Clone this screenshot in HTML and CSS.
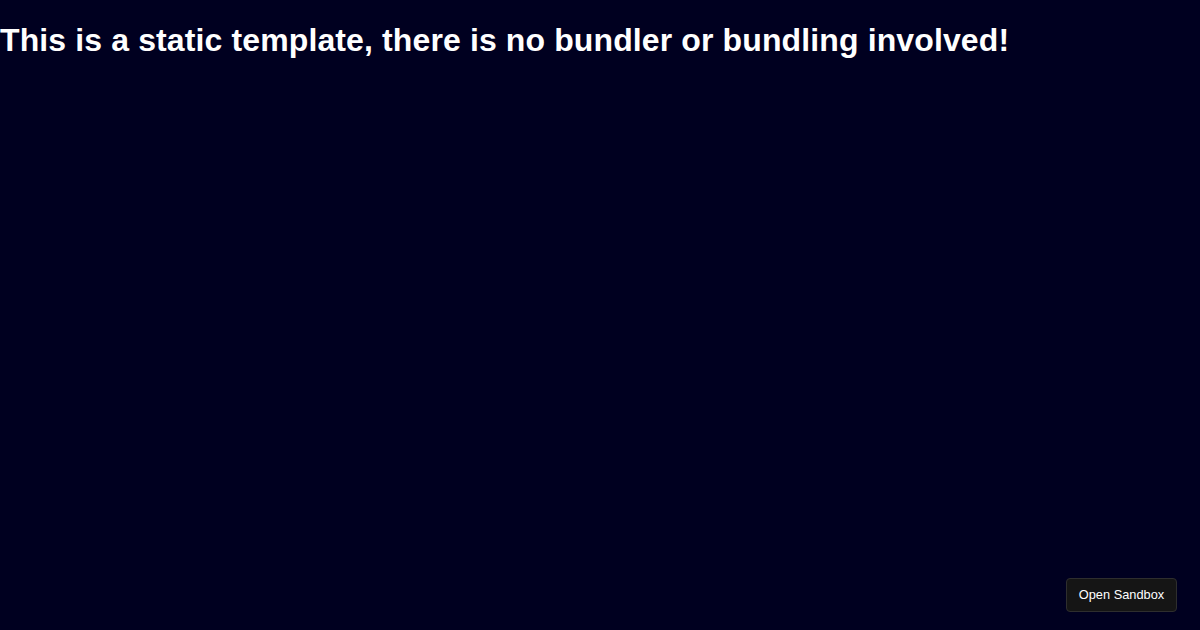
FILE: index.html
```html
<!DOCTYPE html>
<html>
<head>
<meta charset="utf-8">
<link rel="stylesheet" href="styles.css">
</head>
<body>
<h1 class="title">This is a static template, there is no bundler or bundling involved!</h1>
<a class="open-sandbox" href="#">Open Sandbox</a>
</body>
</html>
```
FILE: styles.css
```css
html, body {
  margin: 0;
  padding: 0;
  height: 100%;
}
body {
  background: #000020;
  color: #fff;
  font-family: "Liberation Sans", Arial, sans-serif;
}
.title {
  font-size: 32px;
  font-weight: bold;
  letter-spacing: 0.12px;
  margin: 22px 0;
}
.open-sandbox {
  position: fixed;
  right: 23px;
  bottom: 18px;
  width: 111px;
  height: 34px;
  box-sizing: border-box;
  display: flex;
  align-items: center;
  justify-content: center;
  padding-bottom: 1px;
  background: #151515;
  border: 1px solid #2e2e2e;
  border-radius: 4px;
  color: #fff;
  font-family: "Liberation Sans", Arial, sans-serif;
  font-size: 12.8px;
  text-decoration: none;
}
```
